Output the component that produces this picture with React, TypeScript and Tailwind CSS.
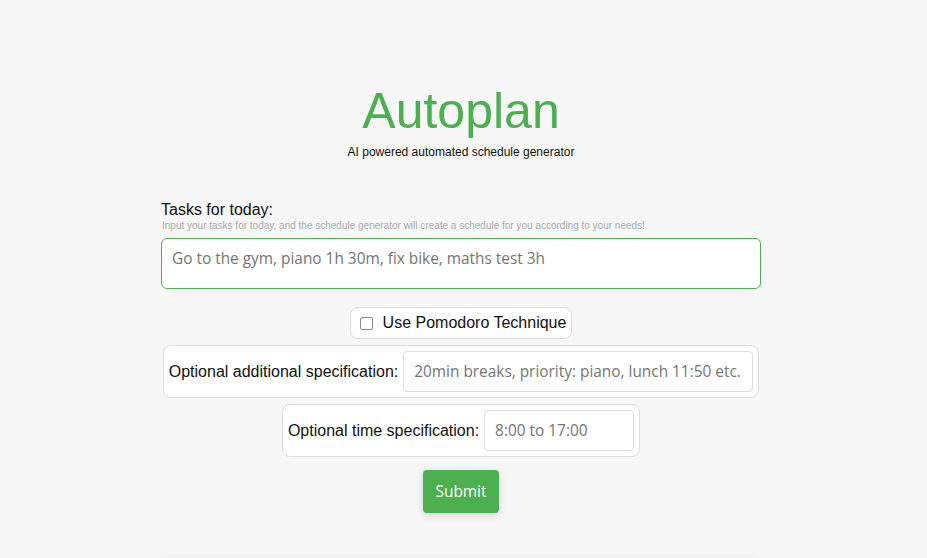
import React from 'react';

const SpecRow: React.FC<{ label: string; placeholder: string; width: string }> = ({ label, placeholder, width }) => {
  return (
    <div className="flex items-center gap-[5px] p-[5px] bg-white border border-[#dddddd] rounded-lg">
      <label className="text-base leading-5 text-[#111]">{label}</label>
      <input
        type="text"
        placeholder={placeholder}
        className={`${width} h-[41px] px-[10px] border border-[#dddddd] rounded-[4px] bg-white outline-none placeholder:text-[#757575] font-['Open_Sans',sans-serif] text-[15.4px]`}
      />
    </div>
  );
};

const App: React.FC = () => {
  return (
    <div className="min-h-screen w-full bg-[#f7f7f7] font-['Liberation_Sans',Arial,sans-serif] overflow-hidden">
      <div className="flex flex-col items-center pt-[83px] pr-[5px]">
        {/* Header */}
        <h1 className="text-[50px] leading-[56px] text-[#4caf50]">Autoplan</h1>
        <p className="mt-[5px] text-xs leading-4 text-[#111]">AI powered automated schedule generator</p>

        {/* Tasks */}
        <div className="w-[600px] mt-[40px]">
          <h2 className="text-base leading-5 text-[#111]">Tasks for today:</h2>
          <p className="text-[10px] leading-3 text-[#aaaaaa] pl-px">
            Input your tasks for today, and the schedule generator will create a schedule for you according to your needs!
          </p>
          <textarea
            placeholder="Go to the gym, piano 1h 30m, fix bike, maths test 3h"
            className="mt-[6px] block w-full h-[51px] px-[10px] pt-[10px] pb-[6px] bg-white border border-[#4caf50] rounded-md resize-none outline-none text-[15.4px] leading-5 placeholder:text-[#757575] font-['Open_Sans',sans-serif]"
          />
        </div>

        {/* Pomodoro */}
        <label className="mt-[18px] flex items-center gap-[10px] p-[5px] bg-white border border-[#dddddd] rounded-lg">
          <span className="ml-[4px] my-[3px] w-[13px] h-[13px] border-[1.5px] border-[#8a8a8a] rounded-[2px] bg-white" />
          <span className="text-base leading-5 text-[#111]">Use Pomodoro Technique</span>
        </label>

        <div className="mt-[6px]">
          <SpecRow
            label="Optional additional specification:"
            placeholder="20min breaks, priority: piano, lunch 11:50 etc."
            width="w-[350px]"
          />
        </div>
        <div className="mt-[6px]">
          <SpecRow label="Optional time specification:" placeholder="8:00 to 17:00" width="w-[150px]" />
        </div>

        <button className="mt-[13px] w-[76px] h-[43px] bg-[#4caf50] text-white rounded-[4px] shadow-[0_2px_8px_rgba(0,0,0,0.15)] text-[15.4px] font-['Open_Sans',sans-serif]">
          Submit
        </button>

        {/* Schedule output (below the fold) */}
        <div className="mt-[44px] w-[600px] h-[200px] bg-[#f7f7f7] rounded-md shadow-[0_0_6px_rgba(0,0,0,0.06)]" />
      </div>
    </div>
  );
};

export default App;
